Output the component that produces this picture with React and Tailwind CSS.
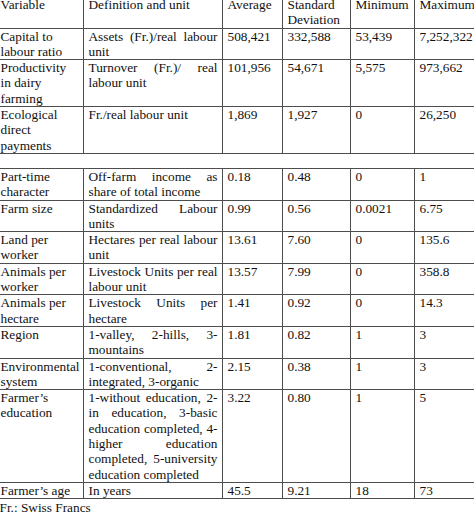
const header = [['Variable'], ['Definition and unit'], ['Average'], ['Standard', 'Deviation'], ['Minimum'], ['Maximum']]

const topRows = [
  [['Capital to', 'labour ratio'], ['Assets (Fr.)/real labour', 'unit'], '508,421', '332,588', '53,439', '7,252,322'],
  [['Productivity', 'in dairy', 'farming'], ['Turnover (Fr.)/ real', 'labour unit'], '101,956', '54,671', '5,575', '973,662'],
  [['Ecological', 'direct', 'payments'], ['Fr./real labour unit'], '1,869', '1,927', '0', '26,250'],
]

const bottomRows = [
  [['Part-time', 'character'], ['Off-farm income as', 'share of total income'], '0.18', '0.48', '0', '1'],
  [['Farm size'], ['Standardized Labour', 'units'], '0.99', '0.56', '0.0021', '6.75'],
  [['Land per', 'worker'], ['Hectares per real labour', 'unit'], '13.61', '7.60', '0', '135.6'],
  [['Animals per', 'worker'], ['Livestock Units per real', 'labour unit'], '13.57', '7.99', '0', '358.8'],
  [['Animals per', 'hectare'], ['Livestock Units per', 'hectare'], '1.41', '0.92', '0', '14.3'],
  [['Region'], ['1-valley, 2-hills, 3-', 'mountains'], '1.81', '0.82', '1', '3'],
  [['Environmental', 'system'], ['1-conventional, 2-', 'integrated, 3-organic'], '2.15', '0.38', '1', '3'],
  [
    ['Farmer\u2019s', 'education'],
    ['1-without education, 2-', 'in education, 3-basic', 'education completed, 4-', 'higher education', 'completed, 5-university', 'education completed'],
    '3.22', '0.80', '1', '5',
  ],
  [['Farmer\u2019s age'], ['In years'], '45.5', '9.21', '18', '73'],
]

// every line but the last of a definition is justified, like the printed table
function Lines({ lines, justify }) {
  return lines.map((line, i) => (
    <div
      key={i}
      className={justify && i < lines.length - 1 ? 'text-justify [text-align-last:justify] whitespace-nowrap' : 'whitespace-nowrap'}
    >
      {line}
    </div>
  ))
}

function Cell({ value, justify }) {
  return (
    <td className="border border-[#4d4d4d] px-[4.5px] py-0 align-top text-left">
      {Array.isArray(value) ? <Lines lines={value} justify={justify} /> : value}
    </td>
  )
}

function Table({ rows, withHeader, className }) {
  return (
    <table className={`border-collapse table-fixed w-[485px] ${className ?? ''}`}>
      <colgroup>
        <col className="w-[88px]" />
        <col className="w-[139px]" />
        <col className="w-[60px]" />
        <col className="w-[68px]" />
        <col className="w-[64px]" />
        <col className="w-[66px]" />
      </colgroup>
      <tbody>
        {withHeader && (
          <tr>
            {header.map((h, i) => <Cell key={i} value={h} />)}
          </tr>
        )}
        {rows.map((row, r) => (
          <tr key={r}>
            {row.map((v, i) => <Cell key={i} value={v} justify={i === 1} />)}
          </tr>
        ))}
      </tbody>
    </table>
  )
}

export default function App() {
  return (
    <div className="w-[474px] h-[515px] overflow-hidden bg-white text-[#111] font-['Liberation_Serif','Times_New_Roman',serif] text-[13.3px] leading-[15.3px]">
      <div className="ml-[-5px] mt-[-4px]">
        <Table rows={topRows} withHeader />
        <Table rows={bottomRows} className="mt-[14px]" />
        <div className="pl-[4.5px] pt-[1px]">Fr.: Swiss Francs</div>
      </div>
    </div>
  )
}
